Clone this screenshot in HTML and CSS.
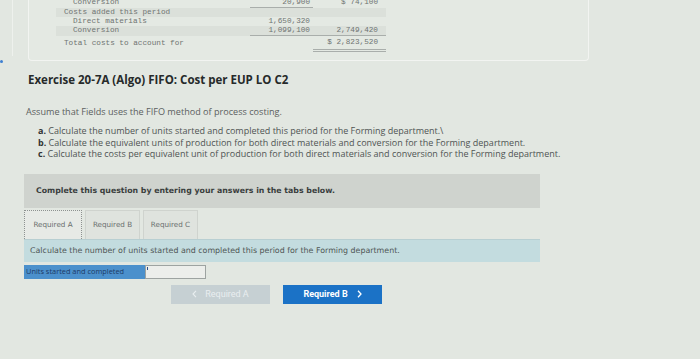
FILE: index.html
```html
<!DOCTYPE html>
<html>
<head>
<meta charset="utf-8">
<link rel="stylesheet" href="styles.css">
</head>
<body>
<div class="page">
  <span class="dot"></span>
  <div class="rail"></div>
  <div class="sheet">
    <table class="costs">
      <tr><td class="lbl sub">Conversion</td><td class="n1 ul">20,900</td><td class="n2">$ 74,100</td></tr>
      <tr class="shade"><td class="lbl">Costs added this period</td><td class="n1"></td><td class="n2"></td></tr>
      <tr><td class="lbl sub">Direct materials</td><td class="n1">1,650,320</td><td class="n2"></td></tr>
      <tr class="shade"><td class="lbl sub">Conversion</td><td class="n1 ul">1,099,100</td><td class="n2 ul">2,749,420</td></tr>
      <tr class="tot"><td class="lbl">Total costs to account for</td><td class="n1"></td><td class="n2 dul">$ 2,823,520</td></tr>
    </table>
  </div>

  <div class="content">
    <h1 class="title">Exercise 20-7A (Algo) FIFO: Cost per EUP LO C2</h1>
    <p class="intro">Assume that Fields uses the FIFO method of process costing.</p>
    <ol class="tasks">
      <li><b>a.</b> Calculate the number of units started and completed this period for the Forming department.\</li>
      <li><b>b.</b> Calculate the equivalent units of production for both direct materials and conversion for the Forming department.</li>
      <li><b>c.</b> Calculate the costs per equivalent unit of production for both direct materials and conversion for the Forming department.</li>
    </ol>

    <div class="notice">Complete this question by entering your answers in the tabs below.</div>

    <div class="tabs">
      <div class="tab active">Required A</div>
      <div class="tab">Required B</div>
      <div class="tab">Required C</div>
    </div>
    <div class="instr">Calculate the number of units started and completed this period for the Forming department.</div>
    <div class="answer">
      <div class="alabel">Units started and completed</div>
      <div class="ainput"><span class="caret"></span></div>
    </div>
    <div class="nav">
      <div class="btn prev">
        <svg class="chev" width="5" height="8" viewBox="0 0 5 8"><path d="M4 0.8 L1 4 L4 7.2" fill="none" stroke="currentColor" stroke-width="1.1"/></svg>
        <span>Required A</span>
      </div>
      <div class="btn next">
        <span>Required B</span>
        <svg class="chev" width="5" height="8" viewBox="0 0 5 8"><path d="M1 0.8 L4 4 L1 7.2" fill="none" stroke="currentColor" stroke-width="1.3"/></svg>
      </div>
    </div>
  </div>
</div>
</body>
</html>
```

FILE: styles.css
```css
html, body {
  margin: 0;
  padding: 0;
}
body {
  background: #e2e7e1;
  width: 700px;
  height: 359px;
  overflow: hidden;
  font-family: "Open Sans", "Liberation Sans", sans-serif;
}
.page {
  position: relative;
  height: 359px;
}
.dot {
  position: absolute;
  left: 0;
  top: 62px;
  width: 3px;
  height: 3px;
  border-radius: 2px;
  background: #3d7fd0;
}
.rail {
  position: absolute;
  left: 12px;
  top: 0;
  width: 1px;
  height: 58px;
  background: #eef1ed;
}
.sheet {
  margin-left: 28px;
  width: 561px;
  margin-top: -2px;
  height: 63px;
  border: 1px solid #f2f4f1;
  border-top: none;
  border-radius: 0 0 4px 4px;
  background: #e4e9e3;
  box-sizing: border-box;
}
.costs {
  margin-left: 27px;
  border-collapse: collapse;
  font-family: "Liberation Mono", "DejaVu Sans Mono", monospace;
  font-size: 7.7px;
  color: #6f7472;
}
.costs td {
  height: 9px;
  padding: 0;
  line-height: 9px;
  white-space: nowrap;
}
.costs .lbl {
  width: 177px;
  padding-left: 8px;
}
.costs .lbl.sub {
  padding-left: 17px;
}
.costs .n1 {
  width: 60px;
  text-align: right;
  padding-right: 3px;
}
.costs .n2 {
  width: 65px;
  text-align: right;
  padding-right: 8px;
}
.costs .shade td { background: #dbe0da; }
.costs .ul { border-bottom: 1px solid #a9aeab; }
.costs .tot td { height: 13px; line-height: 13px; }
.costs .dul { border-bottom: 3px double #a9aeab; }

.content {
  margin-left: 24px;
  width: 516px;
}
.title {
  margin: 12px 0 0 4px;
  font-size: 11.5px;
  line-height: 14px;
  font-weight: 700;
  color: #262a2a;
}
.intro {
  margin: 19px 0 0 2px;
  font-size: 9.1px;
  line-height: 12px;
  color: #5b605f;
}
.tasks {
  list-style: none;
  margin: 7px 0 0 14px;
  padding: 0;
  width: 600px;
  font-size: 9px;
  line-height: 11.5px;
  color: #4f5453;
  white-space: nowrap;
}
.tasks b { color: #2f3333; }
.notice {
  margin-top: 14px;
  height: 34px;
  box-sizing: border-box;
  padding-left: 12px;
  display: flex;
  align-items: center;
  background: #cfd3ce;
  font-family: "DejaVu Sans", Verdana, sans-serif;
  font-weight: 700;
  font-size: 7.8px;
  color: #3a3e3d;
}
.tabs {
  display: flex;
  gap: 3px;
  margin-top: 2px;
  height: 29px;
}
.tab {
  width: 55px;
  box-sizing: border-box;
  border: 1px solid #cfd3ce;
  border-bottom: none;
  background: #dfe3de;
  display: flex;
  align-items: center;
  justify-content: center;
  font-family: "DejaVu Sans", Verdana, sans-serif;
  font-size: 7.2px;
  color: #6a6f6e;
  white-space: nowrap;
}
.tab.active {
  width: 58px;
  background: #e7eae6;
  border: 1px dotted #8d9290;
  border-bottom: none;
}
.instr {
  height: 23px;
  box-sizing: border-box;
  padding-left: 6px;
  display: flex;
  align-items: center;
  background: #c3dcdf;
  border-top: 1px solid #b8cfd2;
  font-family: "DejaVu Sans", Verdana, sans-serif;
  font-size: 7.9px;
  color: #4f5655;
  white-space: nowrap;
}
.answer {
  display: flex;
  margin-top: 3px;
  height: 14px;
}
.alabel {
  width: 121px;
  background: #4b90cc;
  color: #1d3a66;
  font-size: 7.4px;
  line-height: 13px;
  padding-left: 2px;
  box-sizing: border-box;
  white-space: nowrap;
}
.ainput {
  position: relative;
  width: 61px;
  background: #eceeeb;
  border: 1px solid #9da3a1;
  box-sizing: border-box;
}
.caret {
  position: absolute;
  left: 1px;
  top: 1px;
  width: 1px;
  height: 3px;
  background: #2b4e8c;
}
.nav {
  display: flex;
  gap: 13px;
  margin: 6px 0 0 147px;
}
.btn {
  width: 99px;
  height: 19px;
  display: flex;
  align-items: center;
  justify-content: center;
  gap: 8px;
  font-family: "Roboto", "Liberation Sans", sans-serif;
  font-size: 9px;
  white-space: nowrap;
}
.btn.prev {
  background: #c6d0d3;
  color: #e9eef0;
}
.btn.next {
  background: #1b72c6;
  color: #ffffff;
  font-weight: 700;
  gap: 9px;
}
.chev {
  display: block;
}
```
